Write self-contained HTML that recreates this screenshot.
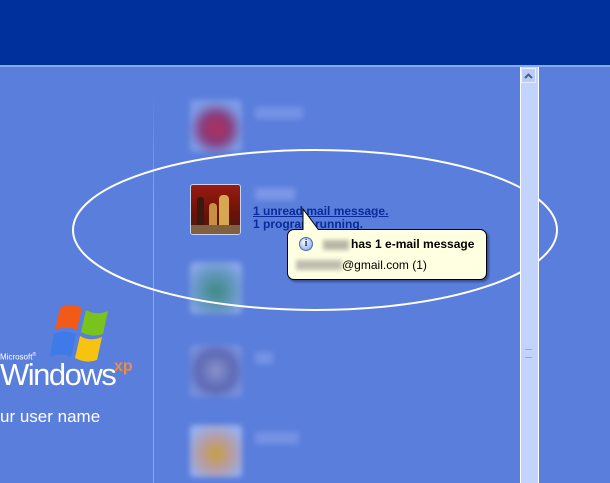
<!DOCTYPE html>
<html><head><style>
*{margin:0;padding:0}
body{width:610px;height:483px;overflow:hidden;background:#5a7edc;position:relative;font-family:"Liberation Sans",sans-serif}
.top{position:absolute;left:0;top:0;width:610px;height:65px;background:#00309c;border-bottom:2px solid #8aa8ec}
.div{position:absolute;left:153px;top:95px;width:1px;height:388px;background:linear-gradient(#5a7edc,#8fa8ec 30%,#8fa8ec)}
.sb{position:absolute;left:520px;top:67px;width:17px;height:416px;background:#c2d3fc;border-left:1px solid #fff;border-right:1px solid #fff}
.sbb{position:absolute;left:521px;top:68px;width:15px;height:15px;background:#b9cdf8;border:1px solid #e8eefc;box-sizing:border-box}
.av{position:absolute;width:52px;height:52px;border-radius:4px;filter:blur(3px)}
.nm{position:absolute;height:12px;background:#7592e4;filter:blur(3px)}
.lnk{position:absolute;left:253px;color:#0a2b9a;font-weight:bold;font-size:12px}
.bal{position:absolute;left:287px;top:229px;width:200px;height:51px;box-sizing:border-box;background:#ffffe1;border:1px solid #000;border-radius:7px;box-shadow:2px 2px 2px rgba(0,0,40,.4);font-size:12px}
</style></head><body>
<div class="top"></div>
<div class="div"></div>
<div class="av" style="left:190px;top:100px;background:radial-gradient(circle at 50% 55%,#b0305a 0,#8a3a7a 35%,#7d9be6 70%)"></div>
<div class="nm" style="left:255px;top:107px;width:48px"></div>
<div class="av" style="left:190px;top:262px;background:radial-gradient(circle at 50% 55%,#3d8a80 0,#6b9ac8 55%,#88a6e8 80%)"></div>
<div class="av" style="left:190px;top:345px;background:radial-gradient(circle at 50% 50%,#8a94cc 0,#5c68b4 50%,#7890dc 80%)"></div>
<div class="nm" style="left:255px;top:352px;width:18px"></div>
<div class="av" style="left:190px;top:425px;background:radial-gradient(circle at 50% 55%,#c8a040 0,#b89ca0 40%,#98b0ee 80%)"></div>
<div class="nm" style="left:255px;top:432px;width:44px"></div>
<div style="position:absolute;left:190px;top:184px;width:49px;height:49px;border:1px solid #c8d4f6;border-radius:3px;background:linear-gradient(#9a1a10,#6a1208 60%,#402010);overflow:hidden">
<div style="position:absolute;left:28px;top:10px;width:10px;height:34px;background:#d8a850;border-radius:4px 4px 0 0"></div>
<div style="position:absolute;left:18px;top:18px;width:8px;height:26px;background:#c89040;border-radius:4px 4px 0 0"></div>
<div style="position:absolute;left:6px;top:12px;width:7px;height:32px;background:#3a1a10;border-radius:3px 3px 0 0"></div>
<div style="position:absolute;left:0;top:40px;width:49px;height:9px;background:#806040"></div>
</div>
<div class="nm" style="left:255px;top:188px;width:40px;background:#7d98e6"></div>
<div class="lnk" style="top:204px;text-decoration:underline">1 unread mail message.</div>
<div class="lnk" style="top:217px">1 program running.</div>
<svg style="position:absolute;left:0;top:0" width="610" height="483"><ellipse cx="315" cy="230" rx="242" ry="80" fill="none" stroke="#fff" stroke-width="2"/></svg>
<div class="bal">
<div style="position:absolute;left:11px;top:7px;width:14px;height:14px;border-radius:50%;background:radial-gradient(circle at 40% 35%,#fff,#6e9ae0);border:1px solid #4a6ab0;box-sizing:border-box;color:#123a90;font:bold 10px 'Liberation Serif',serif;text-align:center;line-height:12px">i</div>
<div style="position:absolute;left:35px;top:10px;width:26px;height:10px;background:#b8b6a8;filter:blur(2px)"></div>
<div style="position:absolute;left:63px;top:7px;font-weight:bold">has 1 e-mail message</div>
<div style="position:absolute;left:8px;top:30px;width:46px;height:10px;background:#c0beb0;filter:blur(2px)"></div>
<div style="position:absolute;left:54px;top:28px">@gmail.com (1)</div>
</div>
<svg style="position:absolute;left:0;top:0" width="610" height="483"><path d="M303,209 L303,230 L318,230 Z" fill="#ffffe1"/><path d="M303,230 L303,209 L318,229" fill="none" stroke="#000" stroke-width="1"/></svg>
<div class="sb"></div>
<div class="sbb"><svg width="13" height="13"><path d="M3,9 L6.5,5.5 L10,9" fill="none" stroke="#4d6185" stroke-width="2"/></svg></div>
<div style="position:absolute;left:525px;top:349px;width:7px;height:7px;border-top:1px solid #8ea8e0;border-bottom:1px solid #8ea8e0"></div>
<svg style="position:absolute;left:50px;top:302px" width="70" height="60">
<path d="M10,6 Q20,0 32,6 L27,28 Q16,23 5,28 Z" fill="#f25a18"/>
<path d="M36,8 Q46,14 58,9 L53,32 Q42,36 31,30 Z" fill="#7ac21c"/>
<path d="M4,32 Q14,27 26,32 L21,55 Q10,50 0,55 Z" fill="#3e7ae8"/>
<path d="M30,34 Q40,40 52,35 L47,58 Q36,62 25,56 Z" fill="#f6c410"/>
</svg>
<div style="position:absolute;left:0;top:352px;color:#fff;font:8px 'Liberation Sans',sans-serif">Microsoft<sup style="font-size:5px">®</sup></div>
<div style="position:absolute;left:0;top:357px;color:#fff;font:31px 'Liberation Sans',sans-serif;letter-spacing:-1.5px">Windows</div>
<div style="position:absolute;left:114px;top:358px;color:#f28c3c;font:bold 16px 'Liberation Sans',sans-serif">xp</div>
<div style="position:absolute;left:0;top:407px;color:#fff;font:17px 'Liberation Sans',sans-serif">ur user name</div>
</body></html>
